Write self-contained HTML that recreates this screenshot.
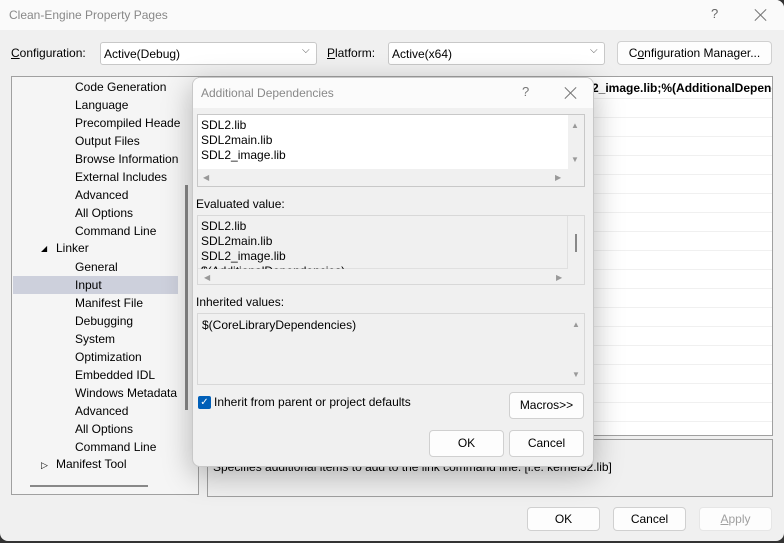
<!DOCTYPE html>
<html><head><style>
*{margin:0;padding:0;box-sizing:border-box}
body{width:784px;height:543px;overflow:hidden;background:#333;font-family:"Liberation Sans",sans-serif;font-size:12px;color:#000;position:relative}
.a{position:absolute}
.win{left:0;top:0;width:784px;height:541px;background:#f0f0f0;border-radius:0 8px 8px 8px;overflow:hidden}
.t{white-space:nowrap;line-height:14px}
.btn{position:absolute;background:#fdfdfd;border:1px solid #d0d0d0;border-radius:4px;text-align:center;font-size:12px}
.combo{position:absolute;background:#fff;border:1px solid #c8c8c8;border-radius:3px;height:23px}
.tri{font-size:8px;color:#999}
.x{position:absolute;width:12px;height:12px}
.x:before,.x:after{content:"";position:absolute;left:5px;top:-2px;width:1px;height:16px;background:#777;transform:rotate(45deg)}
.x:after{transform:rotate(-45deg)}
</style></head><body>
<div class="a win">
 <div class="a" style="left:0;top:0;width:784px;height:30px;background:#fafafa"></div>
 <div class="a t" style="left:9px;top:8px;color:#888">Clean-Engine Property Pages</div>
 <div class="a t" style="left:711px;top:7px;color:#666;font-size:13px">?</div>
 <div class="x" style="left:755px;top:9px"></div>

 <div class="a t" style="left:11px;top:46px"><u>C</u>onfiguration:</div>
 <div class="combo" style="left:100px;top:42px;width:217px"><span class="a t" style="left:3px;top:4px">Active(Debug)</span><span class="a" style="left:201px;top:2px;color:#555;font-size:10px">⌵</span></div>
 <div class="a t" style="left:327px;top:46px"><u>P</u>latform:</div>
 <div class="combo" style="left:388px;top:42px;width:217px"><span class="a t" style="left:3px;top:4px">Active(x64)</span><span class="a" style="left:201px;top:2px;color:#555;font-size:10px">⌵</span></div>
 <div class="btn" style="left:617px;top:41px;width:155px;height:24px;line-height:22px">C<u>o</u>nfiguration Manager...</div>

 <div class="a" style="left:11px;top:76px;width:188px;height:419px;border:1px solid #a0a0a0;background:#f5f5f5"></div>
 <div class="a" style="left:13px;top:276px;width:165px;height:18px;background:#cdd0dc"></div>
 <div class="a" style="left:185px;top:185px;width:3px;height:225px;background:#888"></div>
 <div class="a" style="left:30px;top:485px;width:118px;height:2px;background:#888"></div>
 <div class="a" style="left:75px;top:78px;line-height:18px;white-space:nowrap">Code Generation<br>Language<br>Precompiled Heade<br>Output Files<br>Browse Information<br>External Includes<br>Advanced<br>All Options<br>Command Line</div>
 <div class="a t" style="left:41px;top:242px;font-size:8px">◢</div>
 <div class="a t" style="left:56px;top:241px">Linker</div>
 <div class="a" style="left:75px;top:258px;line-height:18px;white-space:nowrap">General<br>Input<br>Manifest File<br>Debugging<br>System<br>Optimization<br>Embedded IDL<br>Windows Metadata<br>Advanced<br>All Options<br>Command Line</div>
 <div class="a t" style="left:41px;top:458px;font-size:9px">▷</div>
 <div class="a t" style="left:56px;top:457px">Manifest Tool</div>

 <div class="a" style="left:198px;top:76px;width:575px;height:360px;border:1px solid #a0a0a0;background:#fff;background-image:repeating-linear-gradient(to bottom,transparent 0,transparent 18px,#f0f0f0 18px,#f0f0f0 19px);background-position:0 3px"></div>
 <div class="a t" style="left:592px;top:81px;font-weight:bold;width:180px;overflow:hidden">2_image.lib;%(AdditionalDepend</div>
 <div class="a" style="left:207px;top:439px;width:566px;height:58px;border:1px solid #a0a0a0;background:#f0f0f0"></div>
 <div class="a t" style="left:213px;top:460px">Specifies additional items to add to the link command line. [i.e. kernel32.lib]</div>

 <div class="btn" style="left:527px;top:507px;width:73px;height:24px;line-height:22px">OK</div>
 <div class="btn" style="left:613px;top:507px;width:73px;height:24px;line-height:22px">Cancel</div>
 <div class="btn" style="left:699px;top:507px;width:73px;height:24px;line-height:22px;color:#a0a0a0;border-color:#e6e6e6"><u>A</u>pply</div>
</div>

<div class="a" style="left:192px;top:77px;width:402px;height:390px;background:#f0f0f0;border:1px solid #c8c8c8;border-radius:8px;box-shadow:0 8px 30px rgba(0,0,0,0.28);overflow:hidden">
 <div class="a" style="left:0;top:0;width:402px;height:30px;background:#fbfbfb"></div>
 <div class="a t" style="left:8px;top:8px;color:#888">Additional Dependencies</div>
 <div class="a t" style="left:329px;top:7px;color:#777;font-size:13px">?</div>
 <div class="x" style="left:372px;top:9px"></div>

 <div class="a" style="left:4px;top:36px;width:388px;height:73px;border:1px solid #c8c8c8;background:#fff"></div>
 <div class="a" style="left:5px;top:91px;width:370px;height:17px;background:#f0f0f0"></div>
 <div class="a" style="left:375px;top:37px;width:16px;height:71px;background:#f0f0f0"></div>
 <div class="a" style="left:8px;top:40px;line-height:15px;white-space:nowrap">SDL2.lib<br>SDL2main.lib<br>SDL2_image.lib</div>
 <div class="a tri" style="left:378px;top:43px">▲</div>
 <div class="a tri" style="left:378px;top:77px">▼</div>
 <div class="a tri" style="left:10px;top:95px">◀</div>
 <div class="a tri" style="left:362px;top:95px">▶</div>

 <div class="a t" style="left:3px;top:119px">Evaluated value:</div>
 <div class="a" style="left:4px;top:137px;width:388px;height:70px;border:1px solid #d8d8d8;background:#f0f0f0;overflow:hidden">
  <div class="a" style="left:369px;top:0;width:1px;height:52px;background:#e0e0e0"></div>
  <div class="a" style="left:0;top:52px;width:370px;height:1px;background:#e0e0e0"></div>
  <div class="a" style="left:3px;top:3px;line-height:15px;white-space:nowrap">SDL2.lib<br>SDL2main.lib<br>SDL2_image.lib<br>$(AdditionalDependencies)</div>
  <div class="a" style="left:0;top:53px;width:388px;height:17px;background:#f0f0f0"></div>
  <div class="a" style="left:377px;top:18px;width:2px;height:18px;background:#888"></div>
  <div class="a tri" style="left:6px;top:57px">◀</div>
  <div class="a tri" style="left:358px;top:57px">▶</div>
 </div>

 <div class="a t" style="left:3px;top:217px">Inherited values:</div>
 <div class="a" style="left:4px;top:235px;width:388px;height:72px;border:1px solid #d8d8d8;background:#f0f0f0">
  <div class="a t" style="left:4px;top:4px">$(CoreLibraryDependencies)</div>
  <div class="a tri" style="left:374px;top:6px">▲</div>
  <div class="a tri" style="left:374px;top:56px">▼</div>
 </div>

 <div class="a" style="left:5px;top:318px;width:13px;height:13px;background:#005fb8;border-radius:2px;color:#fff;font-size:10px;line-height:13px;text-align:center">✓</div>
 <div class="a t" style="left:21px;top:317px">Inherit from parent or project defaults</div>
 <div class="btn" style="left:316px;top:314px;width:75px;height:27px;line-height:25px">Macros&gt;&gt;</div>
 <div class="btn" style="left:236px;top:352px;width:75px;height:27px;line-height:25px">OK</div>
 <div class="btn" style="left:316px;top:352px;width:75px;height:27px;line-height:25px">Cancel</div>
</div>
</body></html>
